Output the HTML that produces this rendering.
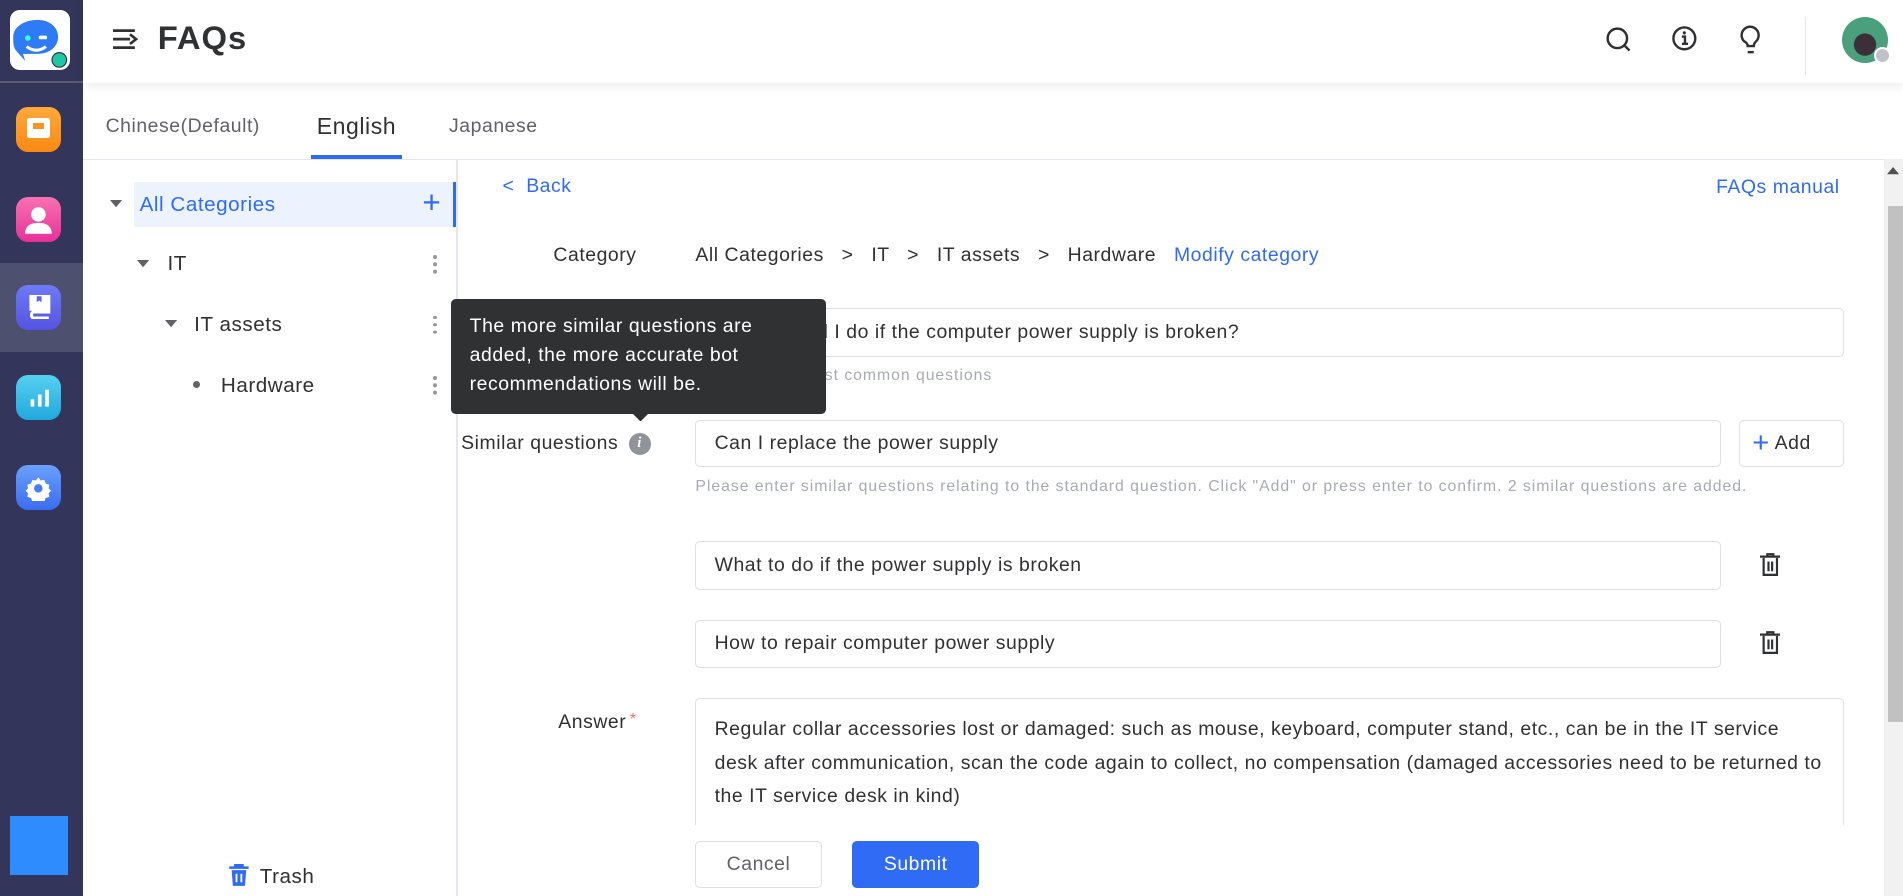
<!DOCTYPE html>
<html><head><meta charset="utf-8"><style>
*{box-sizing:border-box;margin:0;padding:0}
html,body{width:1903px;height:896px;overflow:hidden;background:#fff}
#w{zoom:1.21365;width:1568px;height:738px;position:relative;font-family:"Liberation Sans",Arial,sans-serif;color:#303133;overflow:hidden;letter-spacing:0.45px}
.a{position:absolute}
.sb{left:0;top:0;width:68px;height:738px;background:#33355a}
.ic{left:13px;width:37px;height:37px;border-radius:10px}
.hd{left:68px;top:0;right:0;height:68px;background:#fff;box-shadow:0 3px 8px rgba(0,0,0,.08)}
.t{font-size:16px;white-space:nowrap}
.inp{border:1px solid #dcdfe6;border-radius:4px;background:#fff;font-size:16px;padding-left:15px;display:flex;align-items:center}
.help{font-size:13px;color:#a8abb2;letter-spacing:0.8px;white-space:nowrap}
.dots{width:3px;height:3px;background:#999;border-radius:50%;box-shadow:0 6px 0 #999,0 12px 0 #999}
</style></head><body><div id="w">
<div class="a sb"></div>
<div class="a" style="left:0;top:67px;width:68px;height:1px;background:#5b5c6e"></div>
<div class="a" style="left:8px;top:8px;width:50px;height:50px;background:#fff;border-radius:8px"></div>
<svg class="a" style="left:10px;top:12px" width="46" height="46" viewBox="0 0 46 46"><path d="M21 4c10 0 17 6 17 14s-7 14-17 14h-12l2 6-8-9c-2-3-2-7-2-11 0-8 9-14 20-14z" fill="#2f7bf5"/><circle cx="13" cy="19" r="2.3" fill="#3fd"/><rect x="22" y="17" width="7" height="3" rx="1.5" fill="#fff"/><path d="M12 26q8 6 16 0" stroke="#fff" stroke-width="2.5" fill="none"/><circle cx="39" cy="37" r="6" fill="#1dc9a0" stroke="#33355a" stroke-width="1"/></svg>
<div class="a ic" style="top:88px;background:linear-gradient(#ffa93b,#f88a12)"></div>
<div class="a" style="left:22px;top:97px;width:19px;height:17px;border:3px solid #fff;border-radius:2px;background:#fff"><div style="margin:2px auto;width:9px;height:5px;background:#f8961f"></div></div>
<div class="a ic" style="top:162px;background:linear-gradient(#f872b0,#e7309a)"></div>
<svg class="a" style="left:16px;top:166px" width="32" height="30"><circle cx="16" cy="11" r="6" fill="#fff"/><path d="M5 27q0-9 11-9t11 9z" fill="#fff"/></svg>
<div class="a" style="left:0;top:217px;width:68px;height:73px;background:#4e5070"></div>
<div class="a ic" style="top:235px;background:linear-gradient(#6e7af6,#5454e0)"></div>
<svg class="a" style="left:22px;top:243px" width="20" height="20"><path d="M2 1h16v13H5a3 3 0 0 0 0 5h13" fill="none" stroke="#fff" stroke-width="2.5"/><rect x="2" y="1" width="16" height="12" fill="#fff"/><path d="M8 1v5l2-1.5 2 1.5v-5" fill="#5d64ea"/></svg>
<div class="a ic" style="top:309px;background:linear-gradient(#55d0f0,#22a8dd)"></div>
<svg class="a" style="left:22px;top:318px" width="20" height="20"><rect x="3" y="11" width="3" height="6" fill="#fff"/><rect x="9" y="7" width="3" height="10" fill="#fff"/><rect x="15" y="3" width="3" height="14" fill="#fff"/></svg>
<div class="a ic" style="top:383px;background:linear-gradient(#6aa0ff,#3a6cf0)"></div>
<svg class="a" style="left:21px;top:391px" width="22" height="22" viewBox="0 0 22 22"><path d="M11 2l2 2.5 3-.5 1 3 3 1-.5 3 2 2-2 2 .5 3-3 1-1 3-3-.5-2 2.5-2-2.5-3 .5-1-3-3-1 .5-3-2-2 2-2-.5-3 3-1 1-3 3 .5z" fill="#fff"/><circle cx="11" cy="11" r="3.5" fill="#4a7cf3"/></svg>
<div class="a" style="left:8px;top:672px;width:48px;height:49px;background:#2f8cff"></div>

<div class="a hd"></div>
<svg class="a" style="left:93px;top:22px" width="22" height="20"><path d="M0 3h18M0 10h14M0 17h18M14 6l5 4-5 4" stroke="#303133" stroke-width="2.2" fill="none"/></svg>
<div class="a t" style="left:130px;top:16px;font-size:27px;font-weight:bold;letter-spacing:0.8px">FAQs</div>
<svg class="a" style="left:1322px;top:21px" width="24" height="24"><circle cx="11" cy="11" r="8" stroke="#303133" stroke-width="2" fill="none"/><path d="M17 17l4 4" stroke="#303133" stroke-width="2"/></svg>
<svg class="a" style="left:1377px;top:21px" width="24" height="24"><circle cx="11" cy="11" r="9" stroke="#303133" stroke-width="2" fill="none"/><circle cx="11" cy="6.5" r="1.3" fill="#303133"/><path d="M9 9.5h2.5v6M9 15.5h5" stroke="#303133" stroke-width="2" fill="none"/></svg>
<svg class="a" style="left:1432px;top:19px" width="22" height="30"><path d="M5 15a7 7 0 1 1 10 0c-1.5 1.5-2 2.5-2 4H8c0-1.5-.5-2.5-3-4z" stroke="#303133" stroke-width="2" fill="none"/><path d="M8 24h5" stroke="#303133" stroke-width="2"/></svg>
<div class="a" style="left:1487px;top:14px;width:1px;height:48px;background:#e4e4e4"></div>
<div class="a" style="left:1518px;top:14px;width:38px;height:38px;border-radius:50%;background:radial-gradient(circle at 50% 60%,#3b2f3a 0 30%,#4aa07c 32%)"></div>
<div class="a" style="left:1544px;top:39px;width:14px;height:14px;border-radius:50%;background:#c0c2c8;border:2px solid #fff"></div>

<div class="a t" style="left:87px;top:95px;color:#606266">Chinese(Default)</div>
<div class="a t" style="left:261px;top:93px;font-size:19px">English</div>
<div class="a" style="left:256px;top:128px;width:75px;height:3px;background:#2f6bf5"></div>
<div class="a t" style="left:370px;top:95px;color:#606266">Japanese</div>
<div class="a" style="left:68px;top:131px;right:0;height:1px;background:#e4e7ed"></div>
<div class="a" style="left:376px;top:131px;width:1px;height:607px;background:#e4e7ed"></div>

<div class="a" style="left:110px;top:150px;width:264px;height:37px;background:#ecf3fe"></div>
<div class="a" style="left:373px;top:150px;width:3px;height:37px;background:#2f6bf5"></div>
<svg class="a" style="left:91px;top:165px" width="10" height="6"><path d="M0 0h10L5 6z" fill="#606266"/></svg>
<div class="a t" style="left:115px;top:159px;color:#2f6bf5;font-size:17px">All Categories</div>
<div class="a t" style="left:348px;top:154px;color:#2f6bf5;font-size:26px;line-height:26px">+</div>
<svg class="a" style="left:113px;top:214px" width="10" height="6"><path d="M0 0h10L5 6z" fill="#606266"/></svg>
<div class="a t" style="left:138px;top:208px;font-size:17px">IT</div>
<div class="a dots" style="left:357px;top:210px"></div>
<svg class="a" style="left:136px;top:264px" width="10" height="6"><path d="M0 0h10L5 6z" fill="#606266"/></svg>
<div class="a t" style="left:160px;top:258px;font-size:17px">IT assets</div>
<div class="a dots" style="left:357px;top:260px"></div>
<div class="a" style="left:159px;top:314px;width:6px;height:6px;border-radius:50%;background:#606266"></div>
<div class="a t" style="left:182px;top:308px;font-size:17px">Hardware</div>
<div class="a dots" style="left:357px;top:310px"></div>
<svg class="a" style="left:188px;top:712px" width="18" height="19"><path d="M1 3h16M6 3V1h6v2" stroke="#2f6bf5" stroke-width="2" fill="none"/><path d="M3 5h12l-1 13H4z" fill="#2f6bf5"/><path d="M7 8v7M11 8v7" stroke="#fff" stroke-width="1.5"/></svg>
<div class="a t" style="left:214px;top:713px;font-size:17px">Trash</div>

<div class="a" style="left:1552px;top:131px;width:16px;height:607px;background:#f1f1f1"></div>
<div class="a" style="left:1556px;top:170px;width:12px;height:425px;background:#c1c1c1"></div>
<svg class="a" style="left:1555px;top:138px" width="10" height="6"><path d="M0 6h10L5 0z" fill="#505050"/></svg>

<div class="a t" style="left:414px;top:144px;color:#2f6bf5">&lt;&nbsp; Back</div>
<div class="a t" style="left:1414px;top:145px;color:#2f6bf5">FAQs manual</div>
<div class="a t" style="left:456px;top:201px">Category</div>
<div class="a t" style="left:573px;top:201px">All Categories &nbsp;&nbsp;&gt;&nbsp;&nbsp; IT &nbsp;&nbsp;&gt;&nbsp;&nbsp; IT assets &nbsp;&nbsp;&gt;&nbsp;&nbsp; Hardware &nbsp;&nbsp;<span style="color:#2f6bf5">Modify category</span></div>
<div class="a inp" style="left:573px;top:254px;width:946px;height:40px">What should I do if the computer power supply is broken?</div>
<div class="a help" style="left:573px;top:302px">Please enter most common questions</div>

<div class="a t" style="left:380px;top:356px">Similar questions</div>
<div class="a" style="left:518px;top:357px;width:18px;height:18px;border-radius:50%;background:#909399;color:#fff;font:italic bold 12px 'Liberation Serif',serif;text-align:center;line-height:18px">i</div>
<div class="a inp" style="left:573px;top:346px;width:845px;height:39px">Can I replace the power supply</div>
<div class="a inp" style="left:1433px;top:346px;width:86px;height:39px;padding-left:10px"><span style="color:#2f6bf5;font-size:24px;margin-right:4px;line-height:20px">+</span>Add</div>
<div class="a help" style="left:573px;top:394px">Please enter similar questions relating to the standard question. Click "Add" or press enter to confirm. 2 similar questions are added.</div>
<div class="a inp" style="left:573px;top:446px;width:845px;height:40px">What to do if the power supply is broken</div>
<div class="a inp" style="left:573px;top:511px;width:845px;height:39px">How to repair computer power supply</div>
<svg class="a" style="left:1450px;top:456px" width="17" height="19"><path d="M0 3h17M6 3V1h5v2" stroke="#303133" stroke-width="1.8" fill="none"/><path d="M3 4v14h11V4M7 7v8M10 7v8" stroke="#303133" stroke-width="1.8" fill="none"/></svg>
<svg class="a" style="left:1450px;top:520px" width="17" height="19"><path d="M0 3h17M6 3V1h5v2" stroke="#303133" stroke-width="1.8" fill="none"/><path d="M3 4v14h11V4M7 7v8M10 7v8" stroke="#303133" stroke-width="1.8" fill="none"/></svg>

<div class="a t" style="left:460px;top:586px">Answer<span style="color:#f56c6c;font-size:13px;vertical-align:top;margin-left:3px">*</span></div>
<div class="a" style="left:573px;top:575px;width:946px;height:115px;border:1px solid #dcdfe6;border-bottom:none;border-radius:4px 4px 0 0;padding:12px 15px;font-size:16px;line-height:27.5px">Regular collar accessories lost or damaged: such as mouse, keyboard, computer stand, etc., can be in the IT service desk after communication, scan the code again to collect, no compensation (damaged accessories need to be returned to the IT service desk in kind)</div>
<div class="a" style="left:377px;top:680px;width:1175px;height:58px;background:#fff"></div>
<div class="a" style="left:573px;top:693px;width:104px;height:39px;border:1px solid #dcdfe6;border-radius:4px;color:#606266;font-size:16px;text-align:center;line-height:37px">Cancel</div>
<div class="a" style="left:702px;top:693px;width:105px;height:39px;border-radius:4px;background:#2f6bf5;color:#fff;font-size:16px;text-align:center;line-height:39px">Submit</div>

<div class="a" style="left:372px;top:246px;width:309px;height:95px;background:#303133;border-radius:4px;color:#fff;font-size:16px;line-height:24px;padding:11px 15px">The more similar questions are added, the more accurate bot recommendations will be.</div>
<svg class="a" style="left:521px;top:340px" width="14" height="7"><path d="M0 0h14L7 7z" fill="#303133"/></svg>
</div></body></html>
